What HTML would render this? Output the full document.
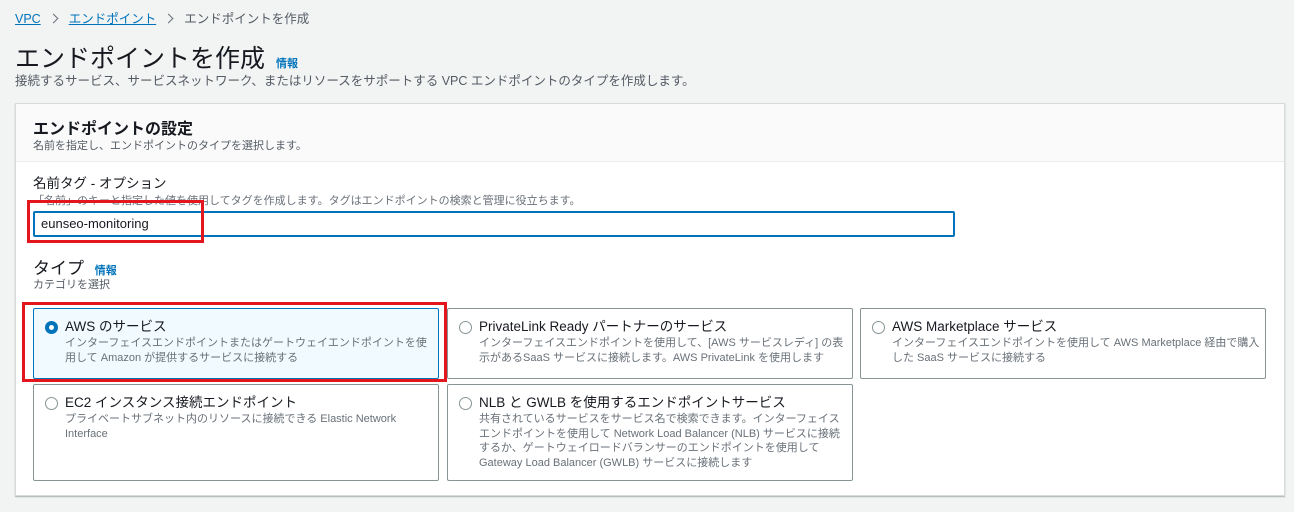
<!DOCTYPE html>
<html><head><meta charset="utf-8"><style>
*{box-sizing:border-box;margin:0;padding:0}
body{width:1294px;height:512px;background:#f2f3f3;font-family:"Liberation Sans","Noto Sans CJK JP",sans-serif;color:#16191f;position:relative;overflow:hidden}
.a{position:absolute;white-space:nowrap}
.link{color:#0073bb}
.panel{position:absolute;left:15px;top:103px;width:1270px;height:393px;background:#fff;border:1px solid #d5dbdb;box-shadow:0 1px 1px rgba(0,28,36,.3)}
.hdr{position:absolute;left:0;top:0;width:100%;height:58px;background:#fafafa;border-bottom:1px solid #eaeded}
.card{position:absolute;border:1px solid #879596;border-radius:2px;background:#fff}
.card.sel{border-color:#0073bb;background:#f1faff}
.rad{position:absolute;left:11px;top:12px;width:13px;height:13px;border:1px solid #879596;border-radius:50%;background:#fff}
.sel .rad{border:4px solid #0073bb}
.ct{position:absolute;left:31px;top:6px;font-size:13.5px;color:#16191f;white-space:nowrap}
.cd{position:absolute;left:31px;top:27px;font-size:11px;line-height:14.5px;color:#687078;width:370px}
.red{position:absolute;border:3px solid #e3161e}
.chev{display:inline-block;width:7px;height:7px;border-top:1.5px solid #687078;border-right:1.5px solid #687078;transform:rotate(45deg);margin:0 12px 1px 9px}
</style></head><body>
<div class="a" style="left:15px;top:8px;font-size:12.5px"><span class="link" style="text-decoration:underline">VPC</span><span class="chev"></span><span class="link" style="text-decoration:underline">エンドポイント</span><span class="chev"></span><span style="color:#545b64">エンドポイントを作成</span></div>
<div class="a" style="left:15px;top:39px;font-size:25px;color:#16191f">エンドポイントを作成 <span class="link" style="font-size:11px;font-weight:bold;margin-left:4px">情報</span></div>
<div class="a" style="left:15px;top:70px;font-size:12.5px;color:#545b64">接続するサービス、サービスネットワーク、またはリソースをサポートする VPC エンドポイントのタイプを作成します。</div>
<div class="panel">
<div class="hdr"></div>
<div class="a" style="left:17px;top:11px;font-size:16px;font-weight:bold">エンドポイントの設定</div>
<div class="a" style="left:17px;top:33px;font-size:11px;color:#545b64">名前を指定し、エンドポイントのタイプを選択します。</div>
<div class="a" style="left:17px;top:68px;font-size:13.5px">名前タグ - オプション</div>
<div class="a" style="left:17px;top:88px;font-size:11px;color:#687078">「名前」のキーと指定した値を使用してタグを作成します。タグはエンドポイントの検索と管理に役立ちます。</div>
<div class="a" style="left:17px;top:107px;width:922px;height:26px;border:2px solid #0073bb;border-radius:2px;background:#fff"></div>
<div class="a" style="left:25px;top:112px;font-size:13px">eunseo-monitoring</div>
<div class="a" style="left:17px;top:150px;font-size:17px">タイプ <span class="link" style="font-size:11px;font-weight:bold;margin-left:6px">情報</span></div>
<div class="a" style="left:17px;top:172px;font-size:11px;color:#545b64">カテゴリを選択</div>
</div>
<div class="card sel" style="left:33px;top:308px;width:406px;height:71px"><div class="rad"></div><div class="ct">AWS のサービス</div><div class="cd">インターフェイスエンドポイントまたはゲートウェイエンドポイントを使用して Amazon が提供するサービスに接続する</div></div>
<div class="card" style="left:447px;top:308px;width:406px;height:71px"><div class="rad"></div><div class="ct">PrivateLink Ready パートナーのサービス</div><div class="cd">インターフェイスエンドポイントを使用して、[AWS サービスレディ] の表示があるSaaS サービスに接続します。AWS PrivateLink を使用します</div></div>
<div class="card" style="left:860px;top:308px;width:406px;height:71px"><div class="rad"></div><div class="ct">AWS Marketplace サービス</div><div class="cd">インターフェイスエンドポイントを使用して AWS Marketplace 経由で購入した SaaS サービスに接続する</div></div>
<div class="card" style="left:33px;top:384px;width:406px;height:97px"><div class="rad"></div><div class="ct">EC2 インスタンス接続エンドポイント</div><div class="cd">プライベートサブネット内のリソースに接続できる Elastic Network Interface</div></div>
<div class="card" style="left:447px;top:384px;width:406px;height:97px"><div class="rad"></div><div class="ct">NLB と GWLB を使用するエンドポイントサービス</div><div class="cd">共有されているサービスをサービス名で検索できます。インターフェイスエンドポイントを使用して Network Load Balancer (NLB) サービスに接続するか、ゲートウェイロードバランサーのエンドポイントを使用して Gateway Load Balancer (GWLB) サービスに接続します</div></div>
<div class="red" style="left:27px;top:200px;width:177px;height:43px"></div>
<div class="red" style="left:22px;top:302px;width:425px;height:80px"></div>
</body></html>
